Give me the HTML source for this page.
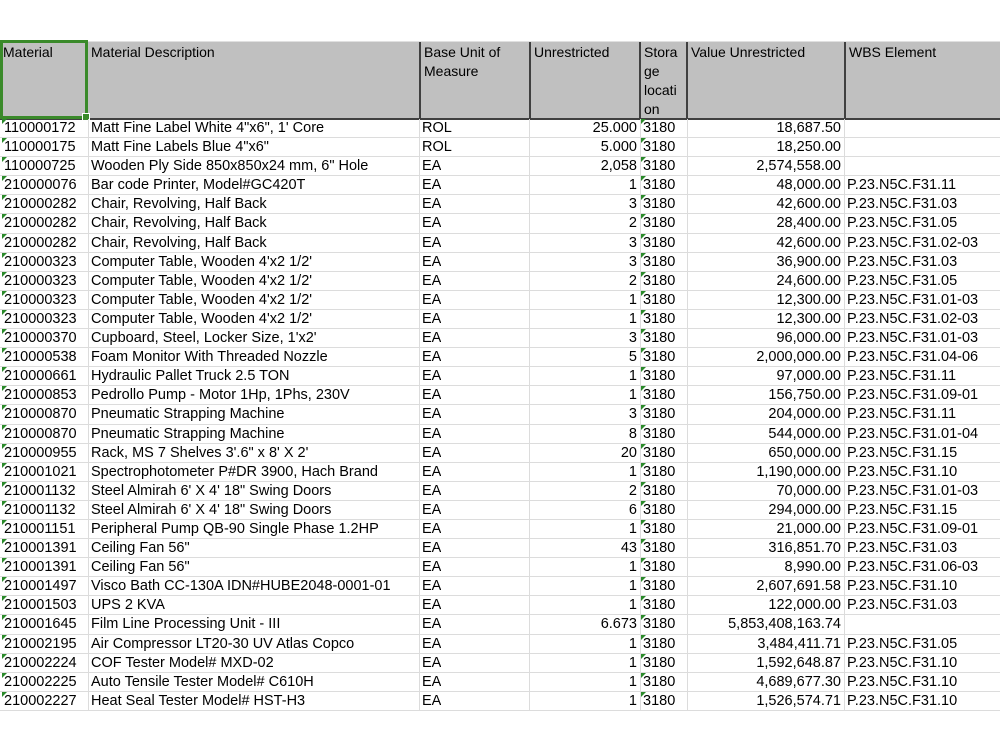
<!DOCTYPE html>
<html><head><meta charset="utf-8"><style>
body{margin:0;background:#fff;width:1000px;height:750px;overflow:hidden;font-family:"Liberation Sans",Arial,sans-serif;font-size:14px;color:#000}
.hdr{position:absolute;top:41px;left:0;width:1000px;height:76px;background:#c0c0c0;border-top:1px solid #e0e0e0;border-bottom:2px solid #404040}
.hc{position:absolute;top:0;height:76px;border-left:2px solid #404040;padding:1px 3px;box-sizing:border-box;line-height:19px;overflow:hidden}
.sel{position:absolute;left:0;top:40px;width:88px;height:79px;border:3px solid #3a8a2a;box-sizing:border-box}
.sel:after{content:"";position:absolute;right:-5px;bottom:-5px;width:6px;height:6px;background:#3a8a2a;border:1px solid #fff}
.rows{position:absolute;top:119px;left:0;width:1000px;font-size:14.5px}
.r{position:relative;height:19.1px;border-bottom:1px solid #dcdcdc;box-sizing:border-box;line-height:18px}
.c{position:absolute;top:0;height:100%;white-space:nowrap;overflow:hidden}
.tri{position:absolute;top:0;width:0;height:0;border-top:5px solid #2a8a2a;border-right:5px solid transparent}
.v{position:absolute;top:0;bottom:0;border-left:1px solid #dcdcdc}
</style></head><body>
<div class="hdr">
<div class="hc" style="left:0;width:86px;border-left:none">Material</div>
<div class="hc" style="left:86px;width:333px">Material Description</div>
<div class="hc" style="left:419px;width:110px">Base Unit of Measure</div>
<div class="hc" style="left:529px;width:110px">Unrestricted</div>
<div class="hc" style="left:639px;width:47px;padding-right:0">Stora ge locati on</div>
<div class="hc" style="left:686px;width:158px">Value Unrestricted</div>
<div class="hc" style="left:844px;width:156px">WBS Element</div>
</div>
<div class="sel"></div>
<div class="rows" id="rows"></div>
<div style="position:absolute;top:119px;height:591px;left:0;width:1000px;pointer-events:none">
<div class="v" style="left:88px"></div><div class="v" style="left:419px"></div><div class="v" style="left:529px"></div><div class="v" style="left:640px"></div><div class="v" style="left:687px"></div><div class="v" style="left:844px"></div>
</div>
<div id="src" style="display:none">
110000172|Matt Fine Label White 4"x6", 1' Core|ROL|25.000|18,687.50|
110000175|Matt Fine Labels Blue 4"x6"|ROL|5.000|18,250.00|
110000725|Wooden Ply Side 850x850x24 mm, 6" Hole|EA|2,058|2,574,558.00|
210000076|Bar code Printer, Model#GC420T|EA|1|48,000.00|P.23.N5C.F31.11
210000282|Chair, Revolving, Half Back|EA|3|42,600.00|P.23.N5C.F31.03
210000282|Chair, Revolving, Half Back|EA|2|28,400.00|P.23.N5C.F31.05
210000282|Chair, Revolving, Half Back|EA|3|42,600.00|P.23.N5C.F31.02-03
210000323|Computer Table, Wooden 4'x2 1/2'|EA|3|36,900.00|P.23.N5C.F31.03
210000323|Computer Table, Wooden 4'x2 1/2'|EA|2|24,600.00|P.23.N5C.F31.05
210000323|Computer Table, Wooden 4'x2 1/2'|EA|1|12,300.00|P.23.N5C.F31.01-03
210000323|Computer Table, Wooden 4'x2 1/2'|EA|1|12,300.00|P.23.N5C.F31.02-03
210000370|Cupboard, Steel, Locker Size, 1'x2'|EA|3|96,000.00|P.23.N5C.F31.01-03
210000538|Foam Monitor With Threaded Nozzle|EA|5|2,000,000.00|P.23.N5C.F31.04-06
210000661|Hydraulic Pallet Truck 2.5 TON|EA|1|97,000.00|P.23.N5C.F31.11
210000853|Pedrollo Pump - Motor 1Hp, 1Phs, 230V|EA|1|156,750.00|P.23.N5C.F31.09-01
210000870|Pneumatic Strapping Machine|EA|3|204,000.00|P.23.N5C.F31.11
210000870|Pneumatic Strapping Machine|EA|8|544,000.00|P.23.N5C.F31.01-04
210000955|Rack, MS 7 Shelves 3'.6" x 8' X 2'|EA|20|650,000.00|P.23.N5C.F31.15
210001021|Spectrophotometer P#DR 3900, Hach Brand|EA|1|1,190,000.00|P.23.N5C.F31.10
210001132|Steel Almirah 6' X 4' 18" Swing Doors|EA|2|70,000.00|P.23.N5C.F31.01-03
210001132|Steel Almirah 6' X 4' 18" Swing Doors|EA|6|294,000.00|P.23.N5C.F31.15
210001151|Peripheral Pump QB-90 Single Phase 1.2HP|EA|1|21,000.00|P.23.N5C.F31.09-01
210001391|Ceiling Fan 56"|EA|43|316,851.70|P.23.N5C.F31.03
210001391|Ceiling Fan 56"|EA|1|8,990.00|P.23.N5C.F31.06-03
210001497|Visco Bath CC-130A IDN#HUBE2048-0001-01|EA|1|2,607,691.58|P.23.N5C.F31.10
210001503|UPS 2 KVA|EA|1|122,000.00|P.23.N5C.F31.03
210001645|Film Line Processing Unit - III|EA|6.673|5,853,408,163.74|
210002195|Air Compressor LT20-30 UV Atlas Copco|EA|1|3,484,411.71|P.23.N5C.F31.05
210002224|COF Tester Model# MXD-02|EA|1|1,592,648.87|P.23.N5C.F31.10
210002225|Auto Tensile Tester Model# C610H|EA|1|4,689,677.30|P.23.N5C.F31.10
210002227|Heat Seal Tester Model# HST-H3|EA|1|1,526,574.71|P.23.N5C.F31.10
</div>
<script>
var L=document.getElementById('src').textContent.trim().split('\n'),h='';
function e(s){return s.replace(/&/g,'&amp;').replace(/</g,'&lt;');}
L.forEach(function(l){var p=l.split('|');
h+='<div class="r"><span class="tri" style="left:2px"></span><span class="c" style="left:4px">'+p[0]+'</span>'+
'<span class="c" style="left:91px">'+e(p[1])+'</span><span class="c" style="left:422px">'+p[2]+'</span>'+
'<span class="c" style="left:529px;width:108px;text-align:right">'+p[3]+'</span>'+
'<span class="tri" style="left:641px"></span><span class="c" style="left:643px">3180</span>'+
'<span class="c" style="left:687px;width:154px;text-align:right">'+p[4]+'</span>'+
'<span class="c" style="left:847px">'+(p[5]||'')+'</span></div>';});
document.getElementById('rows').innerHTML=h;
</script>
</body></html>
